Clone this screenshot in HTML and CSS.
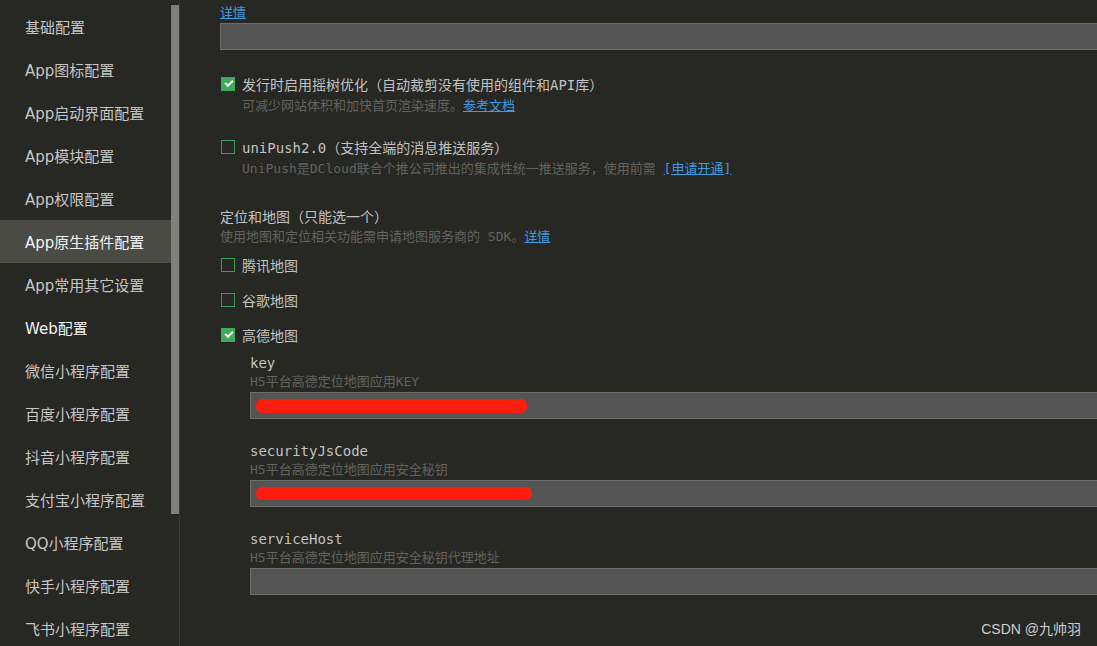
FILE: index.html
```html
<!DOCTYPE html>
<html lang="zh-CN">
<head>
<meta charset="UTF-8">
<title>manifest.json</title>
<link rel="stylesheet" href="styles.css">
</head>
<body>

<!-- 左侧菜单 -->
<div class="sidebar">
    <ul class="menu">
        <li>基础配置</li>
        <li>App图标配置</li>
        <li>App启动界面配置</li>
        <li>App模块配置</li>
        <li>App权限配置</li>
        <li class="active">App原生插件配置</li>
        <li>App常用其它设置</li>
        <li class="group">Web配置</li>
        <li>微信小程序配置</li>
        <li>百度小程序配置</li>
        <li>抖音小程序配置</li>
        <li>支付宝小程序配置</li>
        <li>QQ小程序配置</li>
        <li>快手小程序配置</li>
        <li>飞书小程序配置</li>
    </ul>
    <div class="scrollbar"></div>
</div>

<!-- 右侧配置内容 -->
<div class="main">
    <a class="link top-link">详情</a>
    <div class="field-input"></div>

    <div class="option first">
        <span class="check checked"></span>
        <span class="label">发行时启用摇树优化（自动裁剪没有使用的组件和API库）</span>
    </div>
    <div class="desc indent">可减少网站体积和加快首页渲染速度。<a class="link">参考文档</a></div>

    <div class="option spaced">
        <span class="check"></span>
        <span class="label">uniPush2.0（支持全端的消息推送服务）</span>
    </div>
    <div class="desc indent">UniPush是DCloud联合个推公司推出的集成性统一推送服务，使用前需 <a class="link">[申请开通]</a></div>

    <div class="section-title">定位和地图（只能选一个）</div>
    <div class="desc section-desc">使用地图和定位相关功能需申请地图服务商的 SDK。<a class="link">详情</a></div>

    <div class="option map first-map">
        <span class="check"></span>
        <span class="label">腾讯地图</span>
    </div>
    <div class="option map">
        <span class="check"></span>
        <span class="label">谷歌地图</span>
    </div>
    <div class="option map">
        <span class="check checked"></span>
        <span class="label">高德地图</span>
    </div>

    <div class="sub-fields">
        <div class="sub-field">
            <div class="sub-name">key</div>
            <div class="desc">H5平台高德定位地图应用KEY</div>
            <div class="field-input"><span class="redact redact-key"></span></div>
        </div>
        <div class="sub-field">
            <div class="sub-name">securityJsCode</div>
            <div class="desc">H5平台高德定位地图应用安全秘钥</div>
            <div class="field-input"><span class="redact redact-code"></span></div>
        </div>
        <div class="sub-field">
            <div class="sub-name">serviceHost</div>
            <div class="desc">H5平台高德定位地图应用安全秘钥代理地址</div>
            <div class="field-input"></div>
        </div>
    </div>
</div>

<div class="watermark">CSDN @九帅羽</div>

</body>
</html>
```

FILE: styles.css
```css
/* 页面基础 */
html, body {
    margin: 0;
    height: 100%;
}

body {
    display: flex;
    background-color: #272723;
    overflow: hidden;
    position: relative;
    font-family: "DejaVu Sans Mono", "Noto Sans CJK SC", monospace;
}

/* 左侧菜单 */
.sidebar {
    position: relative;
    width: 179px;
    flex-shrink: 0;
    border-right: 1px solid #393934;
}

.menu {
    list-style: none;
    margin: 0;
    padding: 5px 0 0 0;
    width: 171px;
}

.menu li {
    height: 40px;
    line-height: 40px;
    padding-top: 3px;
    padding-left: 25px;
    font-family: "DejaVu Sans", "Noto Sans CJK SC", sans-serif;
    font-size: 15px;
    color: #c6c6c4;
    white-space: nowrap;
}

.menu li.active {
    background-color: #4b4b46;
    color: #f4f4f4;
}

.menu li.group {
    color: #f2f2f2;
}

.scrollbar {
    position: absolute;
    top: 5px;
    left: 171px;
    width: 8px;
    height: 509px;
    background-color: #7f7f7e;
}

/* 右侧内容 */
.main {
    flex: 1;
    padding-left: 40px;
    overflow: hidden;
}

.link {
    color: #3d9be0;
    text-decoration: underline;
    cursor: pointer;
}

.top-link {
    display: block;
    font-size: 13px;
    line-height: 18px;
    margin-top: 4px;
}

.field-input {
    height: 25px;
    width: 1200px;
    margin-top: 1px;
    background-color: #545454;
    border: 1px solid #6c6c6a;
    position: relative;
}

/* 复选框选项 */
.option {
    display: flex;
    align-items: center;
    height: 20px;
}

.option.first {
    margin-top: 24px;
}

.option.spaced {
    margin-top: 22px;
}

.option.map {
    margin-top: 15px;
}

.option.first-map {
    margin-top: 9px;
}

.check {
    width: 12px;
    height: 12px;
    margin-left: 1px;
    border: 1px solid #3b9c56;
    margin-right: 7px;
    position: relative;
}

.check.checked {
    background-color: #3fa95c;
    border-color: #3fa95c;
}

.check.checked::after {
    content: "";
    position: absolute;
    left: 3px;
    top: 2px;
    width: 6px;
    height: 3px;
    border-left: 2px solid #fff;
    border-bottom: 2px solid #fff;
    transform: rotate(-45deg);
}

.label {
    font-size: 14px;
    color: #c2c2c0;
    white-space: nowrap;
}

.desc {
    font-size: 13px;
    line-height: 18px;
    color: #62625e;
    white-space: nowrap;
}

.indent {
    padding-left: 22px;
    margin-top: 3px;
}

/* 定位和地图 */
.section-title {
    margin-top: 28px;
    font-size: 14px;
    line-height: 20px;
    color: #c2c2c0;
    font-family: "Noto Sans CJK SC", sans-serif;
}

.section-desc {
    margin-top: 2px;
}

.sub-fields {
    padding-left: 30px;
}

.sub-field {
    margin-top: 8px;
}

.sub-field + .sub-field {
    margin-top: 22px;
}

.sub-name {
    font-size: 14px;
    line-height: 20px;
    color: #c2c2c0;
}

.redact {
    position: absolute;
    left: 5px;
    top: 6px;
    height: 14px;
    border-radius: 6px;
    background-color: #ff1e0e;
}

.redact-key {
    width: 271px;
}

.redact-code {
    width: 276px;
    height: 13px;
}

/* 水印 */
.watermark {
    position: absolute;
    right: 16px;
    bottom: 8px;
    font-family: "Liberation Sans", "Noto Sans CJK SC", sans-serif;
    font-size: 14px;
    color: #cfcfcd;
}
```
